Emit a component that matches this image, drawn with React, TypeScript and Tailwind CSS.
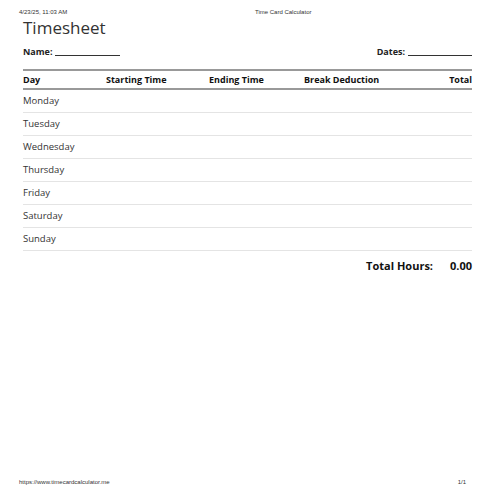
const days = ["Monday", "Tuesday", "Wednesday", "Thursday", "Friday", "Saturday", "Sunday"];

export default function App() {
  return (
    <div className="flex h-[495px] w-[495px] flex-col bg-white text-[#222]">
      {/* print header */}
      <div className="relative flex h-[20px] items-center px-[19px] pt-[4px] font-['Liberation_Sans',Arial,sans-serif] text-[6px] text-[#333]">
        <span>4/23/25, 11:03 AM</span>
        <span className="absolute left-[255px]">Time Card Calculator</span>
      </div>

      <div className="flex flex-col px-[23px] font-['Open_Sans',sans-serif]">
        <h1 className="mt-[-4px] text-[17px] leading-[24px] text-[#333]">Timesheet</h1>

        <div className="mt-[6px] flex items-end justify-between text-[9px] font-bold leading-[12px]">
          <div className="flex items-end gap-[3px]">
            <span>Name:</span>
            <span className="mb-[2px] w-[65px] border-b border-[#333]" />
          </div>
          <div className="flex items-end gap-[3px]">
            <span>Dates:</span>
            <span className="mb-[2px] w-[64px] border-b border-[#333]" />
          </div>
        </div>

        <div className="mt-[11px] border-t-2 border-[#999]">
          <div className="grid h-[19px] grid-cols-[83px_103px_95px_1fr_auto] items-center border-b-2 border-[#999] text-[9px] font-bold text-[#111]">
            <span>Day</span>
            <span>Starting Time</span>
            <span>Ending Time</span>
            <span>Break Deduction</span>
            <span className="text-right">Total</span>
          </div>
          {days.map((d) => (
            <div key={d} className="flex h-[23px] items-center border-b border-[#e4e4e4] text-[9.5px] text-[#333]">
              {d}
            </div>
          ))}
        </div>

        <div className="mt-[8px] flex justify-end gap-[17px] text-[11px] font-bold leading-[14px] text-[#111]">
          <span>Total Hours:</span>
          <span>0.00</span>
        </div>
      </div>

      {/* print footer */}
      <div className="mt-auto mb-[8px] flex justify-between px-[19px] font-['Liberation_Sans',Arial,sans-serif] text-[6px] text-[#333]">
        <span>https://www.timecardcalculator.me</span>
        <span className="mr-[10px]">1/1</span>
      </div>
    </div>
  );
}
